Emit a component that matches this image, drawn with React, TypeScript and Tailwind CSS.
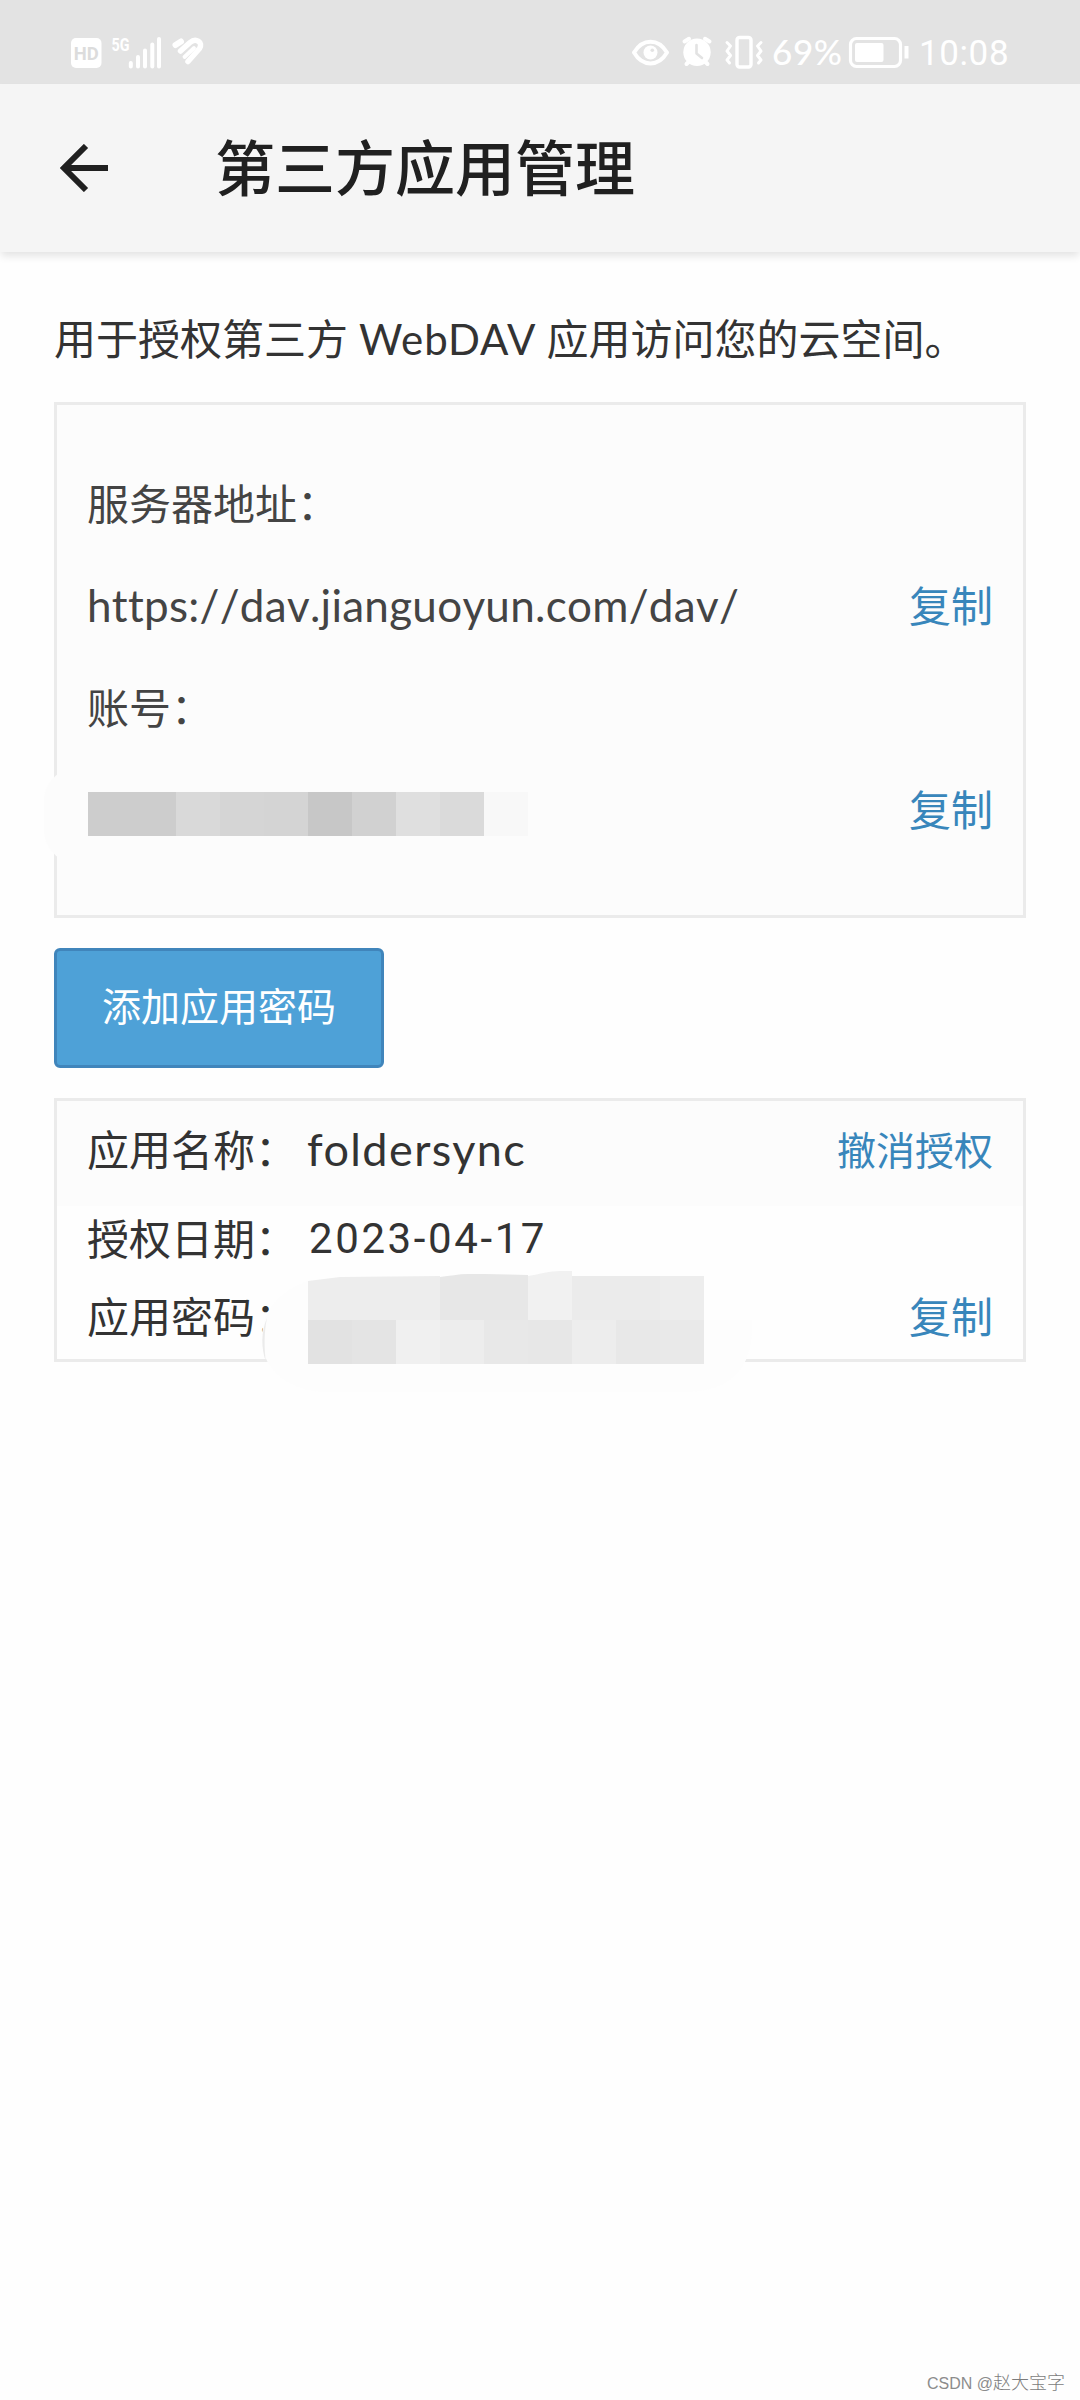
import type { ReactNode } from "react"
import clsx from "clsx"

// mosaic cells are 44px squares, one colour per cell
const accountCells = ["#cdcdcd", "#cdcdcd", "#d9d9d9", "#d5d5d5", "#d4d4d4", "#c7c7c7", "#d1d1d1", "#dfdfdf", "#dadada", "#f8f8f8"]
const passwordCells = ["#e2e2e2", "#e4e4e4", "#f0f0f0", "#ededed", "#e8e8e8", "#e7e7e7", "#ededed", "#e8e8e8", "#e9e9e9"]

function StatusBar() {
	return (
		<div className="flex h-[84px] items-center bg-[#e3e3e3] pt-[22px] text-white">
			<svg className="ml-[70px] h-12 w-[140px]" viewBox="70 29 140 48">
				<rect x="71" y="38" width="30.5" height="30" rx="5" fill="#fff" />
				<text x="86.2" y="60" textAnchor="middle" fontSize="19" fontWeight="700" fill="#dcdcdc" fontFamily="Roboto, sans-serif" textLength="25" lengthAdjust="spacingAndGlyphs">
					HD
				</text>
				<text x="111.5" y="50.5" fontSize="18" fontWeight="700" fill="#fff" fontFamily="Roboto, sans-serif" textLength="18" lengthAdjust="spacingAndGlyphs">
					5G
				</text>
				<g stroke="#fff" strokeWidth="4" strokeLinecap="round">
					<path d="M130.8 63v3.5M138 57v9.5M145 50.5v16M152.3 44.5v22M159 39v27.5" />
				</g>
				<g fill="none" stroke="#fff" strokeLinecap="round" strokeLinejoin="round">
					<path d="M175.5 45L181 41.5" strokeWidth="6" />
					<path d="M180.5 51L190 42.5C196 37.5 203.5 42.5 199.5 48.5L188 61.5" strokeWidth="5.5" />
					<path d="M184.5 57L194 48" strokeWidth="3.8" />
				</g>
			</svg>
			<svg className="ml-[418px] h-12 w-[140px]" viewBox="628 29 140 48">
				<path d="M634 52.5C642.5 38 658.5 38 667 52.5C658.5 67 642.5 67 634 52.5Z" fill="none" stroke="#fff" strokeWidth="4" strokeLinejoin="round" />
				<circle cx="650.5" cy="52.5" r="7" fill="#fff" />
				<circle cx="652.3" cy="50.3" r="1.8" fill="#e3e3e3" />
				<g stroke="#fff" strokeWidth="4" strokeLinecap="round">
					<path d="M684.5 41.5L689 38.8M709.5 41.5L705 38.8M686.5 64L690 60.5M707.5 64L704 60.5" />
				</g>
				<circle cx="697" cy="52.3" r="13.7" fill="#fff" />
				<path d="M696.5 45v8.5l5.5 4.5" fill="none" stroke="#e3e3e3" strokeWidth="2.6" strokeLinecap="round" strokeLinejoin="round" />
				<g fill="none" stroke="#fff">
					<rect x="737" y="37.5" width="14" height="29.5" rx="2.5" strokeWidth="3.4" />
					<path d="M727 42.5l3.5 3.5-3.5 5 3.5 4.5-3.5 4.5 2.5 3M761 42.5l-3.5 3.5 3.5 5-3.5 4.5 3.5 4.5-2.5 3" strokeWidth="3" strokeLinecap="round" strokeLinejoin="round" />
				</g>
			</svg>
			<span className="ml-[4px] w-[74px] pb-[4px] font-[Lato,sans-serif] text-[35px] leading-none font-medium tracking-[0.6px] whitespace-nowrap">69%</span>
			<svg className="ml-[1px] h-12 w-[64px]" viewBox="847 29 64 48">
				<rect x="850.5" y="38.5" width="50" height="28" rx="6" fill="none" stroke="#fff" strokeWidth="3.2" />
				<rect x="855" y="43" width="28.5" height="19" rx="2" fill="#fff" />
				<path d="M906.5 46v12.5" stroke="#fff" strokeWidth="4" />
			</svg>
			<span className="ml-[8px] font-[Roboto,sans-serif] text-[35px] leading-none tracking-[0.6px]">10:08</span>
		</div>
	)
}

function AppBar() {
	return (
		<header className="flex h-[168px] items-center bg-[#f5f5f5] shadow-[0_5px_8px_-1px_rgba(0,0,0,0.11)]">
			<svg className="ml-[60px] h-12 w-12" viewBox="0 0 48 48" fill="none" stroke="#202020" strokeWidth="6">
				<path d="M48 24H5M26 2L4 24L26 46" />
			</svg>
			<h1 className="ml-[107px] text-[60px] leading-none font-medium text-[#202020]">第三方应用管理</h1>
		</header>
	)
}

function Action({ children, small }: { children: ReactNode; small?: boolean }) {
	return <button className={clsx("ml-auto leading-none text-[#3886bb]", small ? "text-[39px]" : "text-[42px]")}>{children}</button>
}

function AccountMosaic() {
	return (
		<svg className="absolute top-[-4px] -left-[43px] h-[124px] w-[490px]" viewBox="44 755 490 124">
			<path d="M102 757C66 761 44 780 44 800V830C44 852 66 870 102 874Z" fill="#fcfcfc" />
			{accountCells.map((fill, i) => (
				<rect key={i} x={88 + i * 44} y="792" width="44" height="44" fill={fill} shapeRendering="crispEdges" />
			))}
		</svg>
	)
}

function PasswordMosaic() {
	return (
		<svg className="absolute -top-[8px] left-[173px] h-[140px] w-[496px]" viewBox="260 1264 496 140">
			<path d="M308 1281C278 1291 262 1312 262 1338C262 1366 282 1388 320 1392H690C734 1390 754 1366 752 1320H704V1281Z" fill="#fdfdfd" />
			<path d="M267 1318C261 1332 261 1348 266 1362C264 1348 264 1332 267 1318Z" fill="#ebebeb" />
			<path d="M308 1281L340 1277L440 1276V1320H308Z" fill="#ededed" />
			<path d="M440 1277C450 1276 458 1274 468 1274H484L528 1275V1320H440Z" fill="#e7e7e7" />
			<path d="M528 1276C540 1274 550 1271 560 1271H572V1320H528Z" fill="#f1f1f1" />
			<g shapeRendering="crispEdges">
				<rect x="572" y="1276" width="88" height="44" fill="#ebebeb" />
				<rect x="660" y="1276" width="44" height="44" fill="#ededed" />
				{passwordCells.map((fill, i) => (
					<rect key={i} x={308 + i * 44} y="1320" width="44" height="44" fill={fill} />
				))}
			</g>
		</svg>
	)
}

export default function App() {
	return (
		<div className="flex h-[2400px] w-[1080px] flex-col overflow-hidden bg-[#fefefe] font-[Lato,'Noto_Sans_CJK_SC',sans-serif] text-[42px] leading-none text-[#333]">
			<StatusBar />
			<AppBar />

			<main className="flex flex-col items-start px-[54px]">
				<p className="mt-[36px] flex h-[102px] items-center pb-[1px] whitespace-pre">
					用于授权第三方<span className="tracking-[0.9px]"> WebDAV </span>应用访问您的云空间。
				</p>

				<section className="mt-[12px] h-[516px] w-full border-[3px] border-[#ebebeb] bg-[#fcfcfc] px-[30px] pt-[48px] text-[#444]">
					<div className="flex h-[102px] items-center">服务器地址：</div>
					<div className="flex h-[102px] items-center">
						<span className="pb-[3px] text-[44px] tracking-[0.28px] [font-kerning:none]">https://dav.jianguoyun.com/dav/</span>
						<Action>复制</Action>
					</div>
					<div className="flex h-[102px] items-center">账号：</div>
					<div className="relative flex h-[102px] items-center">
						<AccountMosaic />
						<Action>复制</Action>
					</div>
				</section>

				<button className="mt-[30px] h-[120px] w-[330px] rounded-[6px] border-[3px] border-[#4085bb] bg-[#4ea1d7] pb-[4px] text-[39px] leading-none text-white">
					添加应用密码
				</button>

				<section className="mt-[30px] h-[264px] w-full border-[3px] border-[#ebebeb]">
					<div className="flex h-[105px] items-center bg-[#fcfcfc] px-[30px] pb-[7px]">
						<span className="w-[220px]">应用名称：</span>
						<span className="pb-[2px] text-[45px] tracking-[1.4px]">foldersync</span>
						<Action small>撤消授权</Action>
					</div>
					<div className="flex h-[66px] items-center px-[30px]">
						<span className="w-[222px]">授权日期：</span>
						<span className="font-[Roboto,sans-serif] tracking-[2.6px]">2023-04-17</span>
					</div>
					<div className="relative mx-[30px] flex h-[87px] items-center pt-[3px]">
						<span className="w-[220px]">应用密码：</span>
						<PasswordMosaic />
						<Action>复制</Action>
					</div>
				</section>
			</main>

			<footer className="mt-auto mr-[15px] mb-[8px] self-end font-['Noto_Sans_CJK_SC',sans-serif] text-[18px] leading-none font-light text-[#7c7c7c]">
				<span className="font-['Liberation_Sans',sans-serif] text-[16px] text-[#8c8c8c]">CSDN @</span>赵大宝字
			</footer>
		</div>
	)
}
